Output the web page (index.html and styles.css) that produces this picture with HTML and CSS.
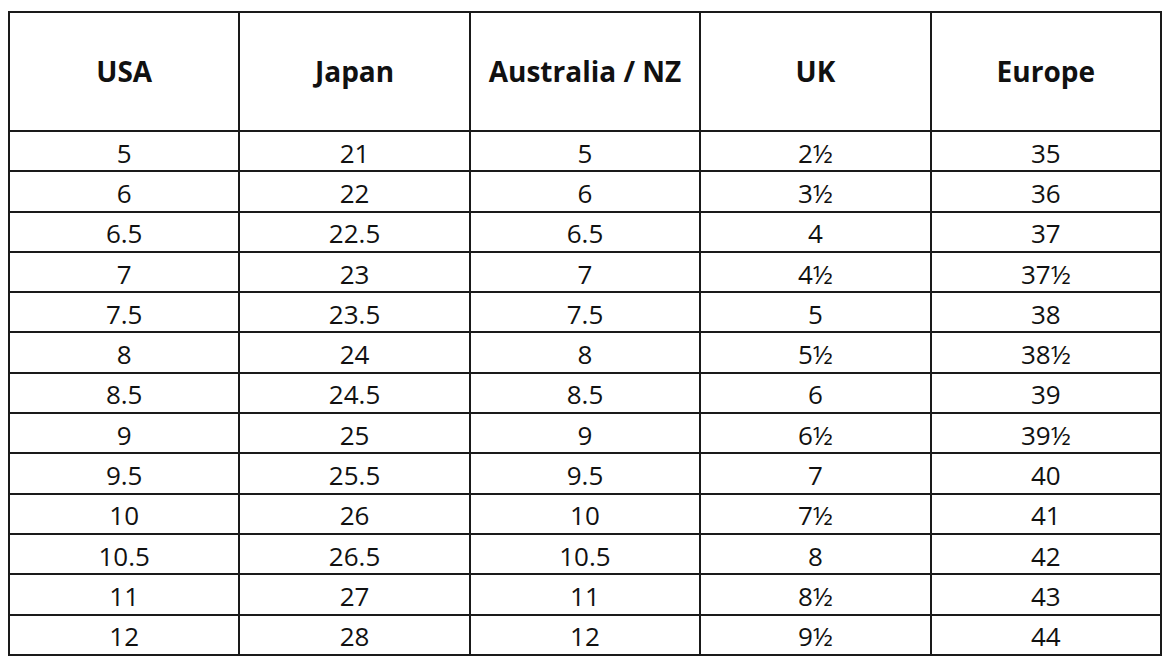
FILE: index.html
```html
<!DOCTYPE html>
<html lang="en">
<head>
<meta charset="utf-8">
<title>Shoe Size Chart</title>
<link rel="stylesheet" href="styles.css">
</head>
<body>
<table class="chart">
  <thead>
    <tr><th>USA</th><th>Japan</th><th>Australia / NZ</th><th>UK</th><th>Europe</th></tr>
  </thead>
  <tbody>
    <tr><td>5</td><td>21</td><td>5</td><td>2½</td><td>35</td></tr>
    <tr><td>6</td><td>22</td><td>6</td><td>3½</td><td>36</td></tr>
    <tr><td>6.5</td><td>22.5</td><td>6.5</td><td>4</td><td>37</td></tr>
    <tr><td>7</td><td>23</td><td>7</td><td>4½</td><td>37½</td></tr>
    <tr><td>7.5</td><td>23.5</td><td>7.5</td><td>5</td><td>38</td></tr>
    <tr><td>8</td><td>24</td><td>8</td><td>5½</td><td>38½</td></tr>
    <tr><td>8.5</td><td>24.5</td><td>8.5</td><td>6</td><td>39</td></tr>
    <tr><td>9</td><td>25</td><td>9</td><td>6½</td><td>39½</td></tr>
    <tr><td>9.5</td><td>25.5</td><td>9.5</td><td>7</td><td>40</td></tr>
    <tr><td>10</td><td>26</td><td>10</td><td>7½</td><td>41</td></tr>
    <tr><td>10.5</td><td>26.5</td><td>10.5</td><td>8</td><td>42</td></tr>
    <tr><td>11</td><td>27</td><td>11</td><td>8½</td><td>43</td></tr>
    <tr><td>12</td><td>28</td><td>12</td><td>9½</td><td>44</td></tr>
  </tbody>
</table>
</body>
</html>
```
FILE: styles.css
```css
html, body {
  margin: 0;
  padding: 0;
  background: #ffffff;
}

body {
  padding: 11px 0 0 8px;
  font-family: "Open Sans", "Liberation Sans", sans-serif;
  color: #111111;
}

.chart {
  width: 1154px;
  table-layout: fixed;
  border-collapse: separate;
  border-spacing: 0;
  border-top: 2px solid #1a1a1a;
  border-left: 2px solid #1a1a1a;
}

.chart th,
.chart td {
  box-sizing: border-box;
  padding: 0;
  text-align: center;
  vertical-align: middle;
  border-right: 2px solid #1a1a1a;
  border-bottom: 2px solid #1a1a1a;
}

.chart th {
  height: 119px;
  font-size: 28px;
  font-weight: 700;
  padding-bottom: 2px;
}

.chart td {
  height: 40.3px;
  font-size: 26px;
  font-weight: 400;
  line-height: 1;
  padding-top: 3px;
}
```
